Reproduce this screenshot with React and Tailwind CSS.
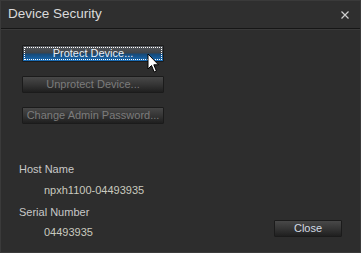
import React from 'react';

const font = { fontFamily: '"Liberation Sans", Arial, sans-serif' };

function DlgButton({ children, primary, disabled, className = '' }) {
  const base =
    'h-[17px] flex items-center justify-center text-[11px] leading-none border border-[#1b1b1b] rounded-[1px] ';
  if (primary) {
    return (
      <button
        className={
          base +
          'relative text-[#e4ecf4] bg-[linear-gradient(to_bottom,#53565b_0%,#3f4449_45%,#154a7a_55%,#1b6db6_100%)] ' +
          className
        }
        style={font}
      >
        <span className="absolute inset-[1px] border border-dotted border-white pointer-events-none" />
        {children}
      </button>
    );
  }
  return (
    <button
      disabled={disabled}
      className={
        base +
        (disabled ? 'text-[#7c7c7c] ' : 'text-[#d3dae4] ') +
        'bg-[linear-gradient(to_bottom,#484848_0%,#353535_50%,#1f1f1f_100%)] ' +
        className
      }
      style={font}
    >
      {children}
    </button>
  );
}

export default function App() {
  return (
    <div
      className="relative w-[361px] h-[253px] bg-[#2d2d2d] flex flex-col overflow-hidden border border-[#3a3a3a]"
      style={font}
    >
      {/* Title bar */}
      <div className="h-[28px] flex items-center justify-between pl-[7px] pr-[11px] bg-[#2f2f2f] border-b border-[#161616]">
        <span className="text-[13.5px] text-[#dadada]">Device Security</span>
        <svg width="8" height="8" viewBox="0 0 8 8" className="mt-[1px]">
          <path d="M0.5 0.5 L7.5 7.5 M7.5 0.5 L0.5 7.5" stroke="#cfcfcf" strokeWidth="1.2" />
        </svg>
      </div>
      <div className="h-px bg-[#3a3a3a]" />

      {/* Body */}
      <div className="flex-1 flex flex-col pl-[18px] pr-[18px] pt-[15px] pb-[13px]">
        <div className="flex flex-col gap-[14px] pl-[3px]">
          <DlgButton primary className="w-[142px]">Protect Device...</DlgButton>
          <DlgButton disabled className="w-[142px]">Unprotect Device...</DlgButton>
          <DlgButton disabled className="w-[142px]">Change Admin Password...</DlgButton>
        </div>

        <div className="mt-auto flex items-end justify-between">
          <div className="text-[11px] leading-[13px]">
            <div className="text-[#c8c8c8]">Host Name</div>
            <div className="text-[#c9c9bf] pl-[25px] mt-[7.5px]">npxh1100-04493935</div>
            <div className="text-[#c8c8c8] mt-[9.5px]">Serial Number</div>
            <div className="text-[#c9c9bf] pl-[25px] mt-[7px]">04493935</div>
          </div>
          <DlgButton className="w-[68px] mb-[2px]">Close</DlgButton>
        </div>
      </div>

      {/* Mouse cursor */}
      <svg
        width="13"
        height="21"
        viewBox="0 0 13 21"
        className="absolute left-[146px] top-[52px] pointer-events-none"
      >
        <path
          d="M1 1 L1 16 L4.5 12.5 L7.2 19 L9.4 18 L6.8 11.8 L11.5 11.8 Z"
          fill="#ffffff"
          stroke="#000000"
          strokeWidth="1"
          strokeLinejoin="miter"
        />
      </svg>
    </div>
  );
}
